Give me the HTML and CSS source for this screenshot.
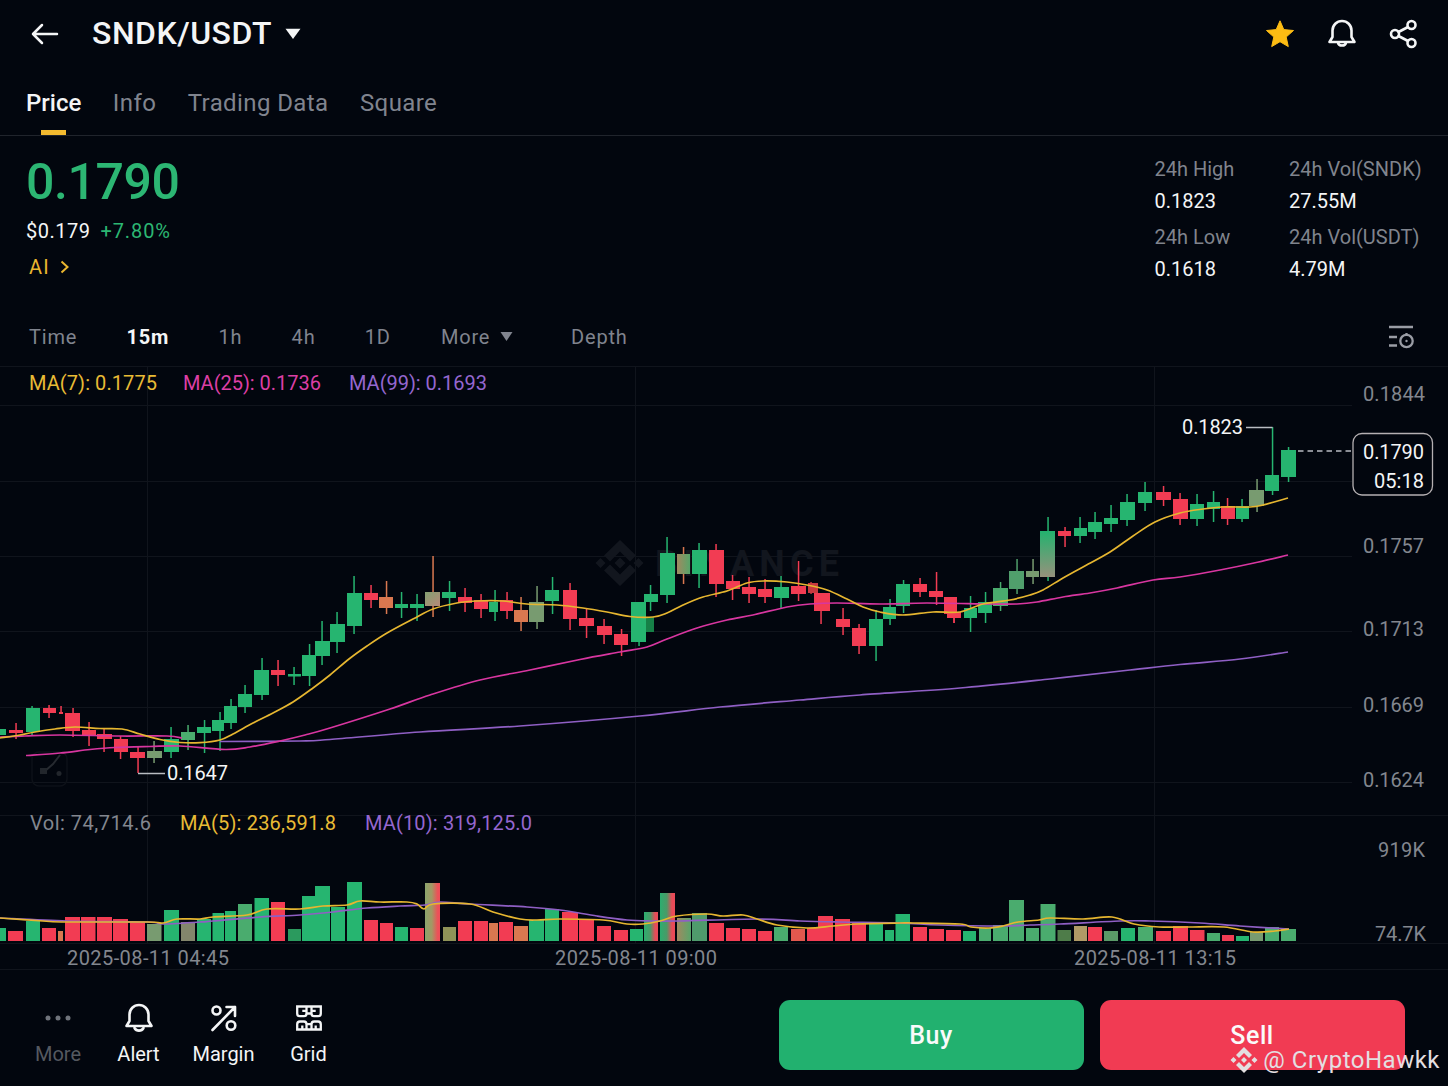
FILE: index.html
```html
<!DOCTYPE html>
<html lang="en">
<head>
<meta charset="utf-8">
<title>SNDK/USDT</title>
<link rel="stylesheet" href="styles.css">
</head>
<body>
<header class="topbar">
  <svg class="back" width="28" height="24" viewBox="0 0 28 24"><path d="M26 12H2M11 3L2 12l9 9"/></svg>
  <h1 class="pair">SNDK/USDT</h1>
  <svg class="caret" width="16" height="12" viewBox="0 0 16 12"><path d="M.5 .8h15L8 11z"/></svg>
  <div class="actions">
    <svg width="30" height="30" viewBox="0 0 30 30"><path class="star" d="M15 1.800l3.800 8.800 9.700.9-7.300 6.500 2.100 9.600L15 22.700l-8.300 4.900 2.100-9.600L1.500 11.500l9.700-.9z"/></svg>
    <svg class="line" width="30" height="30" viewBox="0 0 30 30"><path d="M2.500 23L5.500 18v-6.500a9.500 9.500 0 0 1 19 0V18l3 5z"/><path d="M11 23.500c.5 4 7.500 4 8 0"/></svg>
    <svg class="line" width="30" height="30" viewBox="0 0 30 30"><circle cx="6" cy="15" r="4"/><circle cx="22.500" cy="6" r="4"/><circle cx="22.500" cy="24" r="4"/><path d="M9.500 13L19 8M9.500 17l9.500 5"/></svg>
  </div>
</header>
<nav class="tabs">
  <a class="tab active">Price</a><a class="tab">Info</a><a class="tab">Trading Data</a><a class="tab">Square</a>
</nav>
<section class="summary">
  <div class="quote">
    <div class="price">0.1790</div>
    <div class="change"><span>$0.179</span><span class="up">+7.80%</span></div>
    <div class="ai">AI<svg width="9" height="14" viewBox="0 0 9 14"><path d="M1.500 1.500L7.500 7l-6 5.500"/></svg></div>
  </div>
  <dl class="stats">
    <div><dt>24h High</dt><dd>0.1823</dd></div>
    <div><dt>24h Vol(SNDK)</dt><dd>27.55M</dd></div>
    <div><dt>24h Low</dt><dd>0.1618</dd></div>
    <div><dt>24h Vol(USDT)</dt><dd>4.79M</dd></div>
  </dl>
</section>
<nav class="intervals">
  <a>Time</a><a class="active">15m</a><a>1h</a><a>4h</a><a>1D</a><a class="more">More<svg width="13" height="10" viewBox="0 0 13 10"><path d="M.5 0h12L6.500 9z"/></svg></a><a>Depth</a>
  <svg class="settings" width="27" height="24" viewBox="0 0 27 24"><path d="M1 2h24M1 12h8M1 20.500h8"/><circle cx="18.500" cy="16" r="6.200"/><path d="M18.500 8v3"/><circle class="dot" cx="18.500" cy="16" r="1.200"/></svg>
</nav>
<main class="chart">
  <svg id="plot" width="1448" height="604" viewBox="0 366 1448 604">
    <defs>
      <linearGradient id="mixA"><stop offset="0" stop-color="#8ba46c"/><stop offset=".45" stop-color="#a39864"/><stop offset=".85" stop-color="#ee4f58"/></linearGradient>
      <linearGradient id="mixB"><stop offset="0" stop-color="#2cae6f"/><stop offset=".45" stop-color="#4b9a67"/><stop offset=".8" stop-color="#e94b58"/></linearGradient>
      <linearGradient id="mixC"><stop offset="0" stop-color="#a08a60"/><stop offset="1" stop-color="#57a56a"/></linearGradient>
      <linearGradient id="fadeDown" x2="0" y2="1"><stop offset="0" stop-color="#23b26e"/><stop offset="1" stop-color="#96927c"/></linearGradient>
      <linearGradient id="mixD" x2="1" y2="1"><stop offset="0" stop-color="#83a172"/><stop offset="1" stop-color="#b78978"/></linearGradient>
    </defs>
    <path class="grid" d="M0 366.500H1448M0 405.500H1352M0 481.500H1352M0 556.500H1352M0 631.500H1352M0 707.500H1352M0 782.500H1352M0 815.500H1448M0 943.500H1448M0 969.500H1448M147.500 366V943M635.500 366V943M1154.500 366V943"/>
    <g class="watermark">
      <path d="M620 540l16 15.500-6 6-10-10-10 10-6-6zM620 586l16-15.500-6-6-10 10-10-10-6 6zM620 557.500l5.500 5.500-5.500 5.500-5.500-5.500zM600.500 558l5 5-5 5-5-5zM638.500 558l5 5-5 5-5-5z"/>
      <text x="655" y="576" textLength="184">BINANCE</text>
    </g>
    <g class="tool"><rect x="32" y="752" width="35" height="34" rx="7"/><path class="arm" d="M45 771l8-7 7-9"/><rect class="solid" x="40" y="768" width="7" height="6"/><circle class="solid" cx="59" cy="773.500" r="2.500"/></g>
    <g id="volume"></g>
    <g id="candles"></g>
    <g id="lines"></g>
    <path class="leader" d="M138 773.500h27M1246 427.500h26.500"/>
    <path class="last" d="M1298 451H1352"/>
    <rect class="pricebox" x="1353" y="433.500" width="79.500" height="61.500" rx="9"/>
    <g class="labels">
      <text class="y" x="29" y="390" textLength="128">MA(7): 0.1775</text>
      <text class="m" x="183" y="390" textLength="138">MA(25): 0.1736</text>
      <text class="p" x="349" y="390" textLength="138">MA(99): 0.1693</text>
      <text x="30" y="830" textLength="121">Vol: 74,714.6</text>
      <text class="y" x="180" y="830" textLength="156">MA(5): 236,591.8</text>
      <text class="p" x="365" y="830" textLength="167">MA(10): 319,125.0</text>
      <text x="1363" y="401" textLength="62">0.1844</text>
      <text x="1363" y="553" textLength="61">0.1757</text>
      <text x="1363" y="636" textLength="61">0.1713</text>
      <text x="1363" y="712" textLength="61">0.1669</text>
      <text x="1363" y="787" textLength="61">0.1624</text>
      <text x="1378" y="857" textLength="47">919K</text>
      <text x="1375" y="941" textLength="51">74.7K</text>
      <text x="67" y="965" textLength="162">2025-08-11 04:45</text>
      <text x="555" y="965" textLength="162">2025-08-11 09:00</text>
      <text x="1074" y="965" textLength="162">2025-08-11 13:15</text>
      <text class="w" x="1182" y="434" textLength="61">0.1823</text>
      <text class="w" x="167" y="780" textLength="61">0.1647</text>
      <text class="w" x="1363" y="459" textLength="61">0.1790</text>
      <text class="w" x="1374" y="488" textLength="50">05:18</text>
    </g>
  </svg>
</main>
<footer class="bottombar">
  <div class="shortcuts">
    <a class="muted"><svg width="30" height="30" viewBox="0 0 30 30"><circle cx="5" cy="15" r="2.500"/><circle cx="15" cy="15" r="2.500"/><circle cx="25" cy="15" r="2.500"/></svg>More</a>
    <a><svg class="line" width="30" height="30" viewBox="0 0 30 30"><path d="M2.500 23L5.500 18v-6.500a9.500 9.500 0 0 1 19 0V18l3 5z"/><path d="M10.500 25c2 3.500 7 3.500 9 0"/></svg>Alert</a>
    <a><svg class="line" width="30" height="30" viewBox="0 0 30 30"><circle cx="7.500" cy="7.500" r="4"/><circle cx="22" cy="22.500" r="4.300"/><path d="M3.500 27L26 4M17.500 4H26v9"/></svg>Margin</a>
    <a><svg class="line grid-icon" width="30" height="30" viewBox="0 0 30 30"><path d="M3.200 3.500h23.600v7q0 2.700-2.700 2.700h-4q-2.600 0-2.600-2.700h-5q0 2.700-2.600 2.700h-4q-2.700 0-2.700-2.700zM12.500 3.500v7M17.500 3.500v7M3.200 26.500v-5.300q0-2.700 2.700-2.700h4q2.600 0 2.600 2.700h5q0-2.700 2.600-2.700h4q2.700 0 2.700 2.700v5.300zM12.500 21.200v5.300M17.500 21.200v5.300M8.300 7.800h4M17.700 7.800h4M8.300 22.600v3.500M21.700 22.600v3.500"/></svg>Grid</a>
  </div>
  <button class="trade buy">Buy</button>
  <button class="trade sell">Sell</button>
  <div class="credit"><svg width="28" height="28" viewBox="0 0 28 28"><path d="M14 1l8 8-3 3-5-5-5 5-3-3zM14 27l8-8-3-3-5 5-5-5-3 3zM14 11l3 3-3 3-3-3zM3.500 11l3 3-3 3-3-3zM24.500 11l3 3-3 3-3-3z"/></svg>@ CryptoHawkk</div>
</footer>
<script src="chart.js"></script>
</body>
</html>
```
FILE: styles.css
```css
* { box-sizing: border-box; }
body {
  margin: 0;
  width: 1448px;
  height: 1086px;
  display: flex;
  flex-direction: column;
  overflow: hidden;
  background: #02060e;
  color: #f4f5f6;
  font-family: Roboto, "Liberation Sans", sans-serif;
  font-size: 20px;
}
svg { display: block; flex: none; }
.line { fill: none; stroke: #f4f5f6; stroke-width: 2.6; stroke-linejoin: round; stroke-linecap: round; }
.line.grid-icon { stroke-width: 2.3; stroke-linejoin: miter; stroke-linecap: butt; }

.topbar { height: 68px; padding: 0 29.500px 1px 31px; display: flex; align-items: center; }
.back { fill: none; stroke: #f4f5f6; stroke-width: 2.5; stroke-linecap: round; stroke-linejoin: round; }
.pair { margin: 0 0 0 33px; width: 180px; font-size: 32px; font-weight: 500; letter-spacing: .5px; line-height: 37px; white-space: nowrap; }
.caret { margin-left: 13px; fill: #f4f5f6; }
.actions { margin-left: auto; display: flex; gap: 32px; }
.star { fill: #fdbc13; stroke: #fdbc13; stroke-width: 1; stroke-linejoin: round; }

.tabs { height: 68px; padding: 0 26px; display: flex; gap: 31.5px; border-bottom: 1px solid #20242c; color: #80848e; font-size: 24px; line-height: 70px; letter-spacing: .4px; }
.tab.active { color: #f4f5f6; font-weight: 500; letter-spacing: 0; display: flex; flex-direction: column; align-items: center; }
.tab.active::after { content: ""; width: 25px; height: 5px; margin-top: -8px; background: #f3ba2f; }

.summary { height: 174px; padding: 0 26px; display: flex; justify-content: space-between; }
.price { margin-top: 17px; color: #2cb673; font-size: 50px; font-weight: 500; letter-spacing: -.4px; line-height: 58px; }
.change { margin-top: 8px; display: flex; gap: 10px; letter-spacing: .5px; line-height: 24px; }
.up { color: #2cb673; letter-spacing: .9px; }
.ai { margin: 12px 0 0 3px; display: flex; align-items: center; gap: 10px; color: #eab62f; letter-spacing: 1.2px; line-height: 24px; }
.ai svg { fill: none; stroke: #eab62f; stroke-width: 2; }
.stats { margin: 21px 0 0; display: grid; grid-template-columns: 134.500px 133px; grid-auto-rows: 68px; }
.stats dt { color: #80848d; line-height: 24px; white-space: nowrap; }
.stats dd { margin: 8px 0 0; line-height: 24px; }

.intervals { height: 56px; padding: 0 33px 2px 29px; display: flex; align-items: center; gap: 49.3px; color: #80848e; letter-spacing: .8px; }
.intervals .active { color: #f4f5f6; font-weight: 700; }
.more { display: flex; align-items: center; gap: 10px; margin: 0 8.500px 0 1px; }
.more svg { fill: #80848e; }
.settings { margin-left: auto; fill: none; stroke: #9a9da5; stroke-width: 2.300; }
.settings .dot { fill: #9a9da5; stroke: none; }

.chart { height: 604px; }
.grid { stroke: #10141c; fill: none; }
.watermark { fill: #12161e; font-size: 36px; font-weight: 700; }
.tool { fill: none; stroke: #0d1118; stroke-width: 1.500; }
.tool .arm { stroke: #262a30; stroke-width: 2; }
.tool .solid { fill: #22262c; stroke: none; }
.labels { font-size: 20px; fill: #83878f; }
.labels .y { fill: #e9bb35; }
.labels .m { fill: #dc3fa5; }
.labels .p { fill: #9567cf; }
.labels .w { fill: #f4f5f6; }
.leader { stroke: #b9bcc2; stroke-width: 1.300; fill: none; }
.last { stroke: #b9bcc2; stroke-width: 1.500; stroke-dasharray: 5.500 4; }
.pricebox { fill: #02060e; stroke: #b5b0b2; stroke-width: 1.300; }
.ma { fill: none; stroke-width: 1.700; stroke-linejoin: round; }
.ma-y { stroke: #e6b630; }
.ma-m { stroke: #d836a0; }
.ma-p { stroke: #8f5fc4; }

.bottombar { position: relative; height: 116px; padding: 0 43.500px 16px 20px; display: flex; align-items: flex-end; gap: 16px; }
.shortcuts { margin: 0 auto 4px 0; display: grid; grid-template-columns: 76px 85px 85px 85px; font-size: 20px; line-height: 24px; }
.shortcuts a { display: flex; flex-direction: column; align-items: center; gap: 9px; }
.shortcuts .muted { color: #555960; fill: #70747c; }
.trade { width: 305px; height: 70px; border: 0; border-radius: 11px; color: #fafafa; font: 500 25px Roboto, sans-serif; letter-spacing: .5px; }
.buy { background: #22b16f; }
.sell { background: #f13b53; }
.credit { position: absolute; right: 8px; bottom: 11px; display: flex; align-items: center; gap: 5px; color: #e3dfe1; fill: #e3dfe1; font-size: 24px; letter-spacing: .5px; line-height: 30px; }
```
FILE: chart.js
```js
const G = '#26b570', R = '#f23c53', O = '#d97850', K = '#789b70', L = '#4aac6e', D = '#4e7c49', T = '#b09a66';

// x, width, body top, body bottom, wick x, wick top, wick bottom, colour
const candles = [
 [0,6,729,735,3,729,735,G],[9,14,730,733,16,723,739,R],[26,14,708,732,32,706,736,G],[43,13,708,713,49,705,718,R],
 [59,4,712,714,61,706,714,R],[65,15,713,731,73,708,737,R],[82,14,730,736,89,722,746,R],[97,15,734,739,104,728,752,R],
 [114,14,739,752,120.5,736,759,R],[130,15,752,758,138,746,773,R],[147,15,751,758,154,741,763,K],[164,15,739,752,171,727,758,G],
 [181,14,732,740,188,725,750,L],[197,14,727,733,204.5,720,753,G],[212,12,720,731,220,712,751,G],[224,13,706,723,231,699,729,G],
 [238,14,694,707,245,685,713,G],[254,15,670,695,262,658,700,G],[271,14,670,675,278,660,686,R],[288,13,674,676.5,294,667,685,G],
 [302,14,655,676,309.5,644,686,G],[315,15,641,656,322,621,665,G],[330,15,624,642,337,612,653,G],[347,15,593,626,354,576,634,G],
 [364,14,593,600,371,585,608,R],[379,14,597,608,386.5,581,614,O],[395,13,604,608,401.5,592,618,G],[410,14,604,608,417,594,621,G],
 [425,15,592,606,433,556,617,'url(#mixD)',O],[442,14,592,598,449.5,581,611,G],[458,14,597,603,465,588,612,R],[474,14,600,609,481,594,618,R],
 [489,9,602,612,495,590,621,G],[500,13,600,611,507,592,619,R],[514,14,610,622,521,597,631,O],[529,15,602,622,537,586,629,K],
 [545,14,590,601,552.5,577,614,G],[563,14,590,619,570,583,630,R],[579,15,618,626,586.5,608,638,R],[597,15,626,635,604,619,644,R],
 [614,14,634,645,621.5,629,656,R],[646,8,617,632,650,617,632,'#168047'],[631,15,602,642,639,602,646,G],[644,14,594,602,650.5,585,611,G],
 [660,15,553,595,667,537,603,G],[677,13,554,574,683.5,547,584,'url(#mixC)',O],[692,15,550,574,699,543,588,G],[709,15,550,584,716,544,597,R],
 [726,14,581,589,732.5,575,600,R],[742,14,587,594,749,577,603,R],[758,14,589,597,765,579,603,R],[774,15,587,598,781,576,608,G],
 [791,15,586,594,798.5,561,601,R],[808,10,583,593,811,582,594,'#c83a40'],[814,16,593,611,821,593,624,R],[836,14,619,627,843,608,635,R],
 [852,14,628,646,859,624,654,R],[869,14,619,646,876,610,661,G],[883,13,607,619,890,599,625,G],[896,14,584,606,903.5,580,613,G],
 [913,14,584,592,920,578,597,R],[929,14,591,597,936.5,572,605,R],[944,13,597,614,954,597,623,R],[947,14,612,618,954,612,623,R],
 [964,13,608,618,970.5,596,632,G],[978,14,602,613,985.5,592,623,G],[993,15,588,606,1000.5,582,611,L],[1009,15,571,589,1017,559,594,'#509f6c'],
 [1026,13,571,577,1033,559,584,K],[1040,15,531,577,1048,517,581,'url(#fadeDown)'],[1058,13,531,536,1065,527,547,R],[1074,13,528,536,1080,517,543,G],
 [1088,14,522,532,1095,512,539,G],[1104,14,518,524,1111,505,532,G],[1120,15,502,520,1127,494,526,G],[1138,14,492,503,1145,482,511,G],
 [1156,15,492,500,1163.5,486,506,R],[1173,15,499,519,1180,493,525,R],[1190,14,504,519,1197,494,526,G],[1207,13,502,509,1213.5,491,522,G],
 [1221,14,506,519,1227.5,498,525,R],[1236,13,506,519,1242,499,522,G],[1249,15,490,506,1257,479,512,K],[1265,14,475,491,1272.5,427,495,G],
 [1281,15,450,477,1288.5,447,482,G]
];

// x, width, top, colour
const volume = [
 [0,6,928,G],[8,15,931,R],[26,14,921,G],[42,14,928,R],[58,5,931,O],[65,15,917,R],[81,14.5,917,R],[97,15,917,R],[113,15,919,R],[130,15,922,R],
 [147,14.5,924,K],[164,15,910,G],[181,14,922,'#83866c'],[197,14,919,G],[212.5,11.5,913,G],[225,11,911,G],[238,14,904,L],[254.5,14.5,898,G],[271,14,902,R],
 [288,13,929,'#2b9a5e'],[302,13,896,G],[315,15,886,G],[331,14,907,G],[347,15,882,G],[364,14,920,R],[380,13,923,R],[395,13,927,G],[410,14,928,R],
 [425,15,883,'url(#mixA)'],[443,13,927,'#8f9358'],[458,14,921,R],[474,14,921,R],[489,9,923,O],[499,14,922,R],[514,14,926,O],[529,15,920,G],
 [545,14,909,G],[562,16,912,R],[579,15,920,R],[597,14,926,R],[614,14,930,R],[630,13,929,G],[644,14,912,'url(#mixB)'],[660,15,893,'url(#mixB)'],
 [677,14,918,'url(#mixC)'],[692,15,913,'#4f9b6c'],[709,15,923,R],[726,14,928,R],[742,14,929,R],[758,14,931,R],[774,14,927,L],[791,14,929,'#e2584e'],
 [807,11,928,R],[818,15,916,R],[835,15,919,R],[852,14,923,R],[869,14,924,G],[885,9,930,G],[895.5,14.5,914,G],[913,14,927,R],[929,15,929,R],
 [946,15,930,R],[963,13,931,G],[979,12,928,L],[993,15,925,L],[1009,15,900,L],[1026,13,928,L],[1040.5,15,904,L],[1057.5,13.5,930,D],
 [1074,13,926,T],[1088,14,927,R],[1104,14,931,'#5a9a68'],[1121,14,928,G],[1138,15,927,L],[1156,15,931,R],[1173,15,926,R],[1190,14.5,930,R],
 [1207,13,933,L],[1222,12,935,R],[1236,13,936,G],[1250,13,932,K],[1265,14,927,L],[1281,15,929,L]
];

const lines = [
 ['p', [[220,741.5],[300,741],[330,739.5],[420,732],[520,726],[640,716],[720,707],[800,700],[860,695],[960,688],[1050,679],[1130,670],[1180,664.5],[1240,659],[1288,652]]],
 ['m', [[0,737],[25,736],[60,735],[120,736],[167,736],[182,738]]],
 ['m', [[26,755.5],[60,753],[90,749.5],[115,747.5],[150,746.5],[180,746],[225,749.5],[250,747],[280,741],[305,735],[330,728],[390,709],[430,695],[480,680],[530,670],[580,659.5],[620,652],[647,647],[667,639],[697,628],[727,620],[753,615],[787,607],[810,604],[837,603],[880,604],[927,603],[990,604],[1017,604],[1037,602],[1063,597],[1090,593],[1117,588],[1153,580],[1180,577],[1220,570],[1254,563],[1288,555]]],
 ['y', [[0,738],[20,735],[35,732],[55,729],[75,727],[100,728.5],[122,729],[140,734],[160,739.5],[180,742.5],[200,742.7],[220,740],[233,734],[253,723],[273,713],[293,702],[313,688],[330,675],[349,659],[367,646],[387,633],[413,619],[433,609],[457,603],[477,601],[503,601],[527,604],[557,605],[583,608],[607,612],[630,616.5],[653,617],[667,613],[683,605],[703,597],[727,591],[747,583],[763,581],[787,582],[807,585],[827,590],[847,599],[863,607],[880,612],[903,615],[933,612],[960,612],[983,604],[1010,600],[1030,595],[1043,590],[1063,578],[1083,567],[1110,552],[1133,536],[1155,522],[1180,513],[1203,509],[1223,507],[1250,507],[1263,505],[1288,498]]],
 ['p', [[0,918],[67,921],[147,922],[163,924],[200,922],[213,921],[260,917],[300,915],[333,912],[367,908],[400,906],[425,905],[440,902],[470,904],[527,907],[560,910],[597,916],[627,920],[650,921],[680,921],[757,919],[800,921],[840,922],[900,923],[940,925],[1000,926],[1030,925],[1060,924],[1120,921],[1150,921],[1200,923],[1240,926],[1289,929]]],
 ['y', [[0,918],[43,921],[67,922],[147,922],[163,923],[177,919],[200,919],[213,917],[247,915],[267,909],[300,909],[323,906],[347,905],[360,901],[380,902],[407,902],[417,904],[424,909],[433,904],[470,904],[493,912],[520,919],[537,920],[560,919],[603,920],[627,924],[643,924],[660,921],[677,916],[707,914],[723,916],[743,915],[757,919],[777,925],[807,928],[833,926],[857,924],[900,923],[913,923],[960,924],[971,927],[989,928],[1003,926],[1018,922],[1039,920],[1050,918],[1083,919],[1112,917],[1134,924],[1159,927],[1188,927],[1224,927],[1253,932],[1275,931],[1289,929]]]
];

function add(parent, tag, attrs) {
  const el = document.createElementNS('http://www.w3.org/2000/svg', tag);
  for (const k in attrs) el.setAttribute(k, attrs[k]);
  document.getElementById(parent).appendChild(el);
}

// Catmull-Rom curve through the points, written as cubic segments
function smooth(p) {
  let d = `M${p[0]}`;
  for (let i = 0; i < p.length - 1; i++) {
    const a = p[i - 1] || p[i], b = p[i], c = p[i + 1], e = p[i + 2] || c;
    d += `C${b[0] + (c[0] - a[0]) / 6},${b[1] + (c[1] - a[1]) / 6} ${c[0] - (e[0] - b[0]) / 6},${c[1] - (e[1] - b[1]) / 6} ${c}`;
  }
  return d;
}

for (const [x, w, top, fill] of volume) add('volume', 'rect', { x, y: top, width: w, height: 941 - top, fill });
for (const [x, w, t, b, wx, wt, wb, fill, wick] of candles) {
  const stem = wick || (fill.startsWith('url') ? G : fill);
  add('candles', 'rect', { x: wx - 0.7, y: wt, width: 1.5, height: wb - wt, fill: stem });
  add('candles', 'rect', { x, y: t, width: w, height: b - t, fill });
}
for (const [name, pts] of lines) add('lines', 'path', { class: `ma ma-${name}`, d: smooth(pts) });
```
